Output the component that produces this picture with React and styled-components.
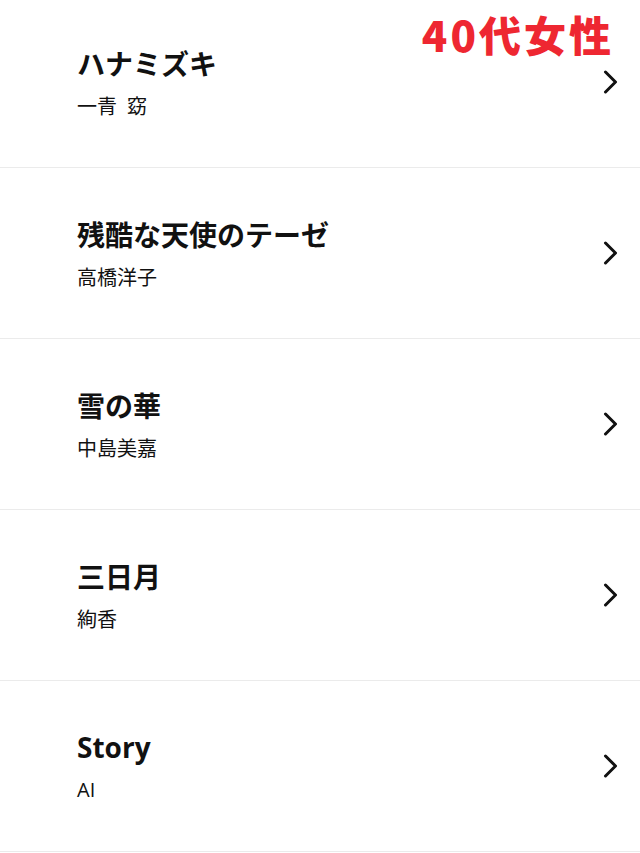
import React from "react";
import styled, { createGlobalStyle } from "styled-components";

const Global = createGlobalStyle`
  html, body { margin: 0; padding: 0; background: #ffffff; }
  body { font-family: "Noto Sans CJK JP", "Noto Sans", sans-serif; color: #111; overflow: hidden; }
`;

const Page = styled.div`
  position: relative;
  width: 640px;
  height: 853px;
  overflow: hidden;
  background: #fff;
`;

const List = styled.ul`
  list-style: none;
  margin: -3px 0 0;
  padding: 0;
`;

const Row = styled.li`
  display: flex;
  align-items: center;
  justify-content: space-between;
  height: 170px;
  padding: 0 21px 0 77px;
  border-bottom: 1px solid #ebebeb;
  box-sizing: content-box;
`;

const Texts = styled.div`
  display: flex;
  flex-direction: column;
  gap: 12px;
`;

const Title = styled.div`
  font-size: 28px;
  font-weight: 700;
  line-height: 1.3;
  color: #111;
  font-family: ${(p) => (p.$latin ? '"Open Sans", "Noto Sans CJK JP", sans-serif' : '"Noto Sans CJK JP", sans-serif')};
`;

const Sub = styled.div`
  font-size: 20px;
  font-weight: 400;
  line-height: 1.3;
  color: #111;
  white-space: pre;
  font-family: ${(p) => (p.$latin ? '"Open Sans", "Noto Sans CJK JP", sans-serif' : '"Noto Sans CJK JP", sans-serif')};
`;

const Badge = styled.div`
  position: absolute;
  top: 9px;
  right: 26px;
  font-family: "Noto Sans CJK JP", sans-serif;
  font-weight: 900;
  font-size: 42px;
  line-height: 1.2;
  letter-spacing: 3px;
  color: #ee2731;
`;

const Chevron = () => (
  <svg width="16" height="24" viewBox="0 0 16 24" fill="none">
    <polyline points="2.5,2 12.5,12 2.5,22" stroke="#111" strokeWidth="3" strokeLinecap="round" strokeLinejoin="round" />
  </svg>
);

const items = [
  { title: "ハナミズキ", sub: "一青\u2002窈" },
  { title: "残酷な天使のテーゼ", sub: "高橋洋子" },
  { title: "雪の華", sub: "中島美嘉" },
  { title: "三日月", sub: "絢香" },
  { title: "Story", sub: "AI", latin: true },
];

export default function App() {
  return (
    <Page>
      <Global />
      <List>
        {items.map((it) => (
          <Row key={it.title}>
            <Texts>
              <Title $latin={it.latin}>{it.title}</Title>
              <Sub $latin={it.latin}>{it.sub}</Sub>
            </Texts>
            <Chevron />
          </Row>
        ))}
      </List>
      <Badge>40代女性</Badge>
    </Page>
  );
}
